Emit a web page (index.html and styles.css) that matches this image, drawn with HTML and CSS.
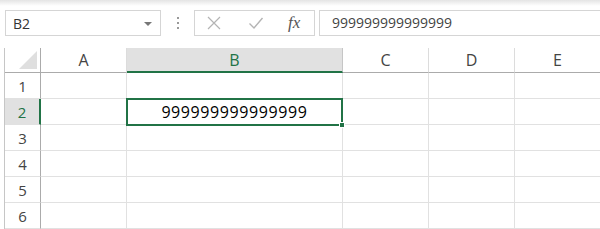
FILE: index.html
```html
<!DOCTYPE html>
<html lang="en">
<head>
    <meta charset="UTF-8">
    <title>Sheet</title>
    <link rel="stylesheet" href="styles.css">
</head>
<body>
    <div class="toolbar">
        <div class="namebox">
            <span>B2</span>
            <span class="arrow"></span>
        </div>
        <div class="dots"><i></i><i></i><i></i></div>
        <div class="fxbox">
            <svg class="ico" width="16" height="16" viewBox="0 0 16 16"><path d="M2 2L14 14M14 2L2 14" stroke="#b4b4b4" stroke-width="1.2" fill="none"/></svg>
            <svg class="ico" width="16" height="16" viewBox="0 0 16 16"><path d="M1.5 8.5L6 13L14.5 3" stroke="#b4b4b4" stroke-width="1.4" fill="none"/></svg>
            <span class="fx">fx</span>
        </div>
        <div class="formula">999999999999999</div>
    </div>

    <div class="sheet">
        <div class="corner"></div>
        <div class="col">A</div>
        <div class="col sel">B</div>
        <div class="col">C</div>
        <div class="col">D</div>
        <div class="col">E</div>

        <div class="row">1</div>
        <div class="cell"></div><div class="cell"></div><div class="cell"></div><div class="cell"></div><div class="cell"></div>

        <div class="row sel">2</div>
        <div class="cell"></div>
        <div class="cell active">999999999999999<span class="handle"></span></div>
        <div class="cell"></div><div class="cell"></div><div class="cell"></div>

        <div class="row">3</div>
        <div class="cell"></div><div class="cell"></div><div class="cell"></div><div class="cell"></div><div class="cell"></div>

        <div class="row">4</div>
        <div class="cell"></div><div class="cell"></div><div class="cell"></div><div class="cell"></div><div class="cell"></div>

        <div class="row">5</div>
        <div class="cell"></div><div class="cell"></div><div class="cell"></div><div class="cell"></div><div class="cell"></div>

        <div class="row">6</div>
        <div class="cell"></div><div class="cell"></div><div class="cell"></div><div class="cell"></div><div class="cell"></div>
    </div>
</body>
</html>
```

FILE: styles.css
```css
*{padding:0; margin:0; box-sizing:border-box;}

body{
    font-family:"Open Sans", "Noto Sans", sans-serif;
    background:#fff;
    overflow:hidden;
}

/* formula bar */
.toolbar{
    height:48px;
    display:flex;
    align-items:flex-start;
    padding:10px 0 0 5px;
    background:linear-gradient(#e4e4e4, #fff 6px);
}
.namebox{
    width:156px;
    height:26px;
    border:1px solid #d5d5d5;
    background:#fff;
    display:flex;
    align-items:center;
    justify-content:space-between;
    padding:0 8px 0 7px;
    font-size:14px;
    color:#333;
}
.namebox .arrow{
    width:0; height:0;
    border-left:4px solid transparent;
    border-right:4px solid transparent;
    border-top:4px solid #777;
    margin-top:2px;
}
.dots{
    width:33px;
    height:26px;
    display:flex;
    flex-direction:column;
    align-items:center;
    justify-content:center;
    gap:3px;
}
.dots i{
    width:2px; height:2px;
    background:#999;
}
.fxbox{
    width:121px;
    height:26px;
    border:1px solid #d5d5d5;
    display:flex;
    align-items:center;
    padding-left:11px;
}
.fxbox .ico{margin-right:26px;}
.fxbox .fx{
    font-family:"Liberation Serif", serif;
    font-style:italic;
    font-size:17px;
    color:#555;
    margin-left:-2px;
}
.formula{
    flex:1;
    height:26px;
    margin-left:4px;
    border:1px solid #d5d5d5;
    border-right:none;
    padding-left:12px;
    font-size:14px;
    line-height:24px;
    color:#444;
}

/* grid */
.sheet{
    margin-left:4px;
    display:grid;
    grid-template-columns:36px 86px 216px 86px 86px 86px;
    grid-template-rows:25px repeat(6, 26px);
    border-left:1px solid #c6c6c6;
}
.corner{
    position:relative;
    border-right:1px solid #ababab;
    border-bottom:1px solid #ababab;
}
.corner::after{
    content:"";
    position:absolute;
    right:3px; bottom:3px;
    width:0; height:0;
    border-left:18px solid transparent;
    border-bottom:18px solid #dfdfdf;
}
.col{
    border-right:1px solid #dcdcdc;
    border-bottom:1px solid #ababab;
    display:flex;
    align-items:center;
    justify-content:center;
    font-size:16px;
    color:#444;
}
.col.sel{
    background:#e1e1e1;
    color:#217346;
    border-bottom:2px solid #217346;
    border-right-color:#c6c6c6;
}
.row{
    border-right:1px solid #ababab;
    border-bottom:1px solid #e1e1e1;
    display:flex;
    align-items:center;
    justify-content:center;
    font-size:15px;
    color:#444;
}
.row.sel{
    background:#e1e1e1;
    color:#217346;
    border-right:2px solid #217346;
}
.cell{
    border-right:1px solid #e1e1e1;
    border-bottom:1px solid #e1e1e1;
}
.cell.active{
    position:relative;
    border:2px solid #217346;
    margin:-1px 0 -1px -1px;
    display:flex;
    align-items:center;
    justify-content:center;
    font-size:16px;
    letter-spacing:0.6px;
    color:#000;
}
.handle{
    position:absolute;
    right:-4px; bottom:-4px;
    width:6px; height:6px;
    background:#217346;
    border:1px solid #fff;
}
```
